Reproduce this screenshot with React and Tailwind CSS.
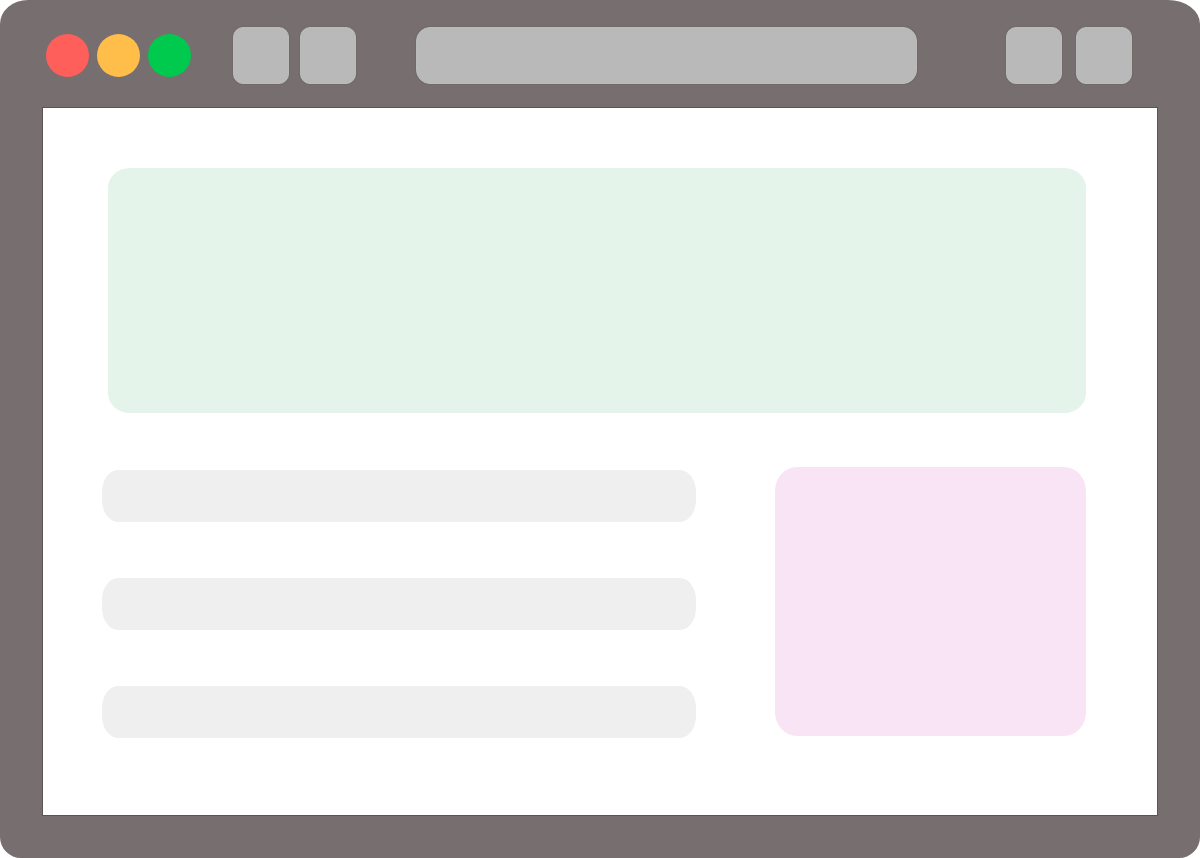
import React from 'react';

const dots = [
  { label: 'Close', color: 'bg-[#ff5f5b]' },
  { label: 'Minimize', color: 'bg-[#ffbd49]' },
  { label: 'Maximize', color: 'bg-[#00ca4e]' },
];

const lines = [1, 2, 3];

function ToolButton({ label }) {
  return (
    <button
      type="button"
      aria-label={label}
      className="h-[57px] w-14 shrink-0 rounded-[10px] border border-[#b9bcbb] bg-[#b9b9b9] shadow-[0_0_0_1px_#726969]"
    />
  );
}

function Toolbar() {
  return (
    <header className="flex items-center pt-[27px] pr-[68px] pb-6 pl-[46px]">
      <div className="flex gap-2">
        {dots.map((dot) => (
          <button
            key={dot.label}
            type="button"
            aria-label={dot.label}
            className={`size-[43px] shrink-0 rounded-full ${dot.color}`}
          />
        ))}
      </div>

      <nav className="ml-[42px] flex gap-[11px]">
        <ToolButton label="Back" />
        <ToolButton label="Forward" />
      </nav>

      <input
        type="text"
        aria-label="Address"
        className="mr-[89px] ml-[60px] h-[57px] min-w-0 flex-1 rounded-[14px] border border-[#b9bcbb] bg-[#b9b9b9] px-4 font-['Liberation_Sans',sans-serif] shadow-[0_0_0_1px_#726969] outline-none"
      />

      <div className="flex gap-[14px]">
        <ToolButton label="Bookmarks" />
        <ToolButton label="Menu" />
      </div>
    </header>
  );
}

export default function App() {
  return (
    <div className="min-h-screen bg-white">
      <div className="flex min-h-screen flex-col rounded-[28px_32px_21px_21px/24px_24px_21px_21px] bg-[#776e6f]">
        <Toolbar />

        <main className="mx-[43px] mb-[43px] flex-1 bg-white pt-[60px] pr-[71px] pb-[76px] pl-[59px] shadow-[0_0_0_1px_#5c5355]">
          {/* hero */}
          <section className="ml-[6px] h-[245px] rounded-[22px/20px] bg-[#e4f4ea]" />

          <div className="mt-[54px] flex items-start gap-[79px]">
            <section className="flex flex-1 flex-col gap-14 pt-[3px]">
              {lines.map((line) => (
                <div key={line} className="h-[52px] rounded-[16px/22px] bg-[#efefef]" />
              ))}
            </section>
            <aside className="h-[269px] w-[311px] rounded-[22px/24px] bg-[#f9e4f6]" />
          </div>
        </main>
      </div>
    </div>
  );
}
